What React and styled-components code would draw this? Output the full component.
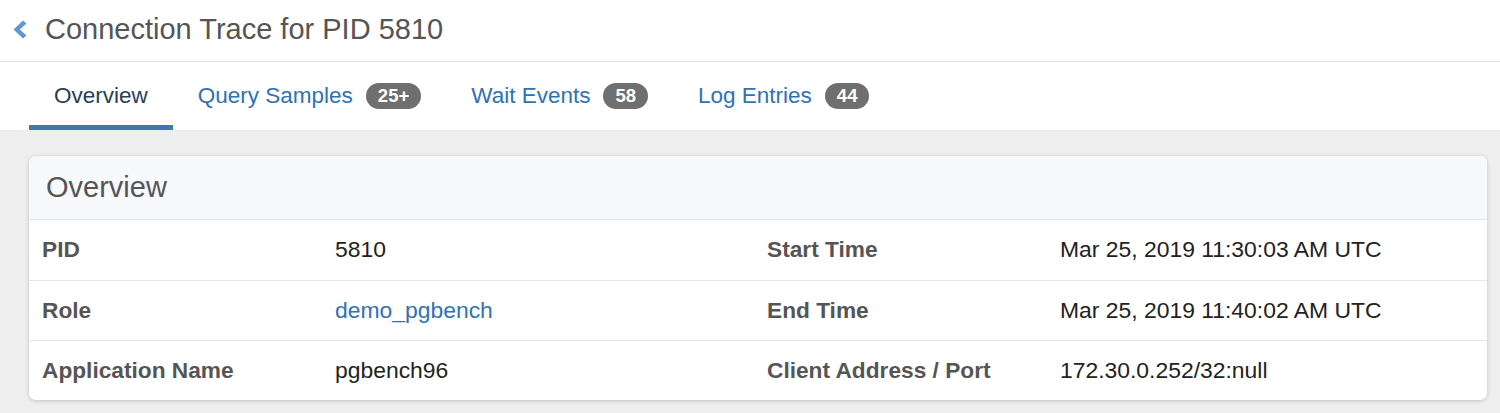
import React from "react";
import styled, { createGlobalStyle } from "styled-components";

const GlobalStyle = createGlobalStyle`
  html, body {
    margin: 0;
    padding: 0;
    background: #eeeeee;
    font-family: "Liberation Sans", Arial, sans-serif;
  }
`;

const Page = styled.div`
  width: 1500px;
  height: 413px;
  background: #eeeeee;
  overflow: hidden;
`;

const Header = styled.div`
  height: 61px;
  background: #fff;
  border-bottom: 1px solid #e2e2e2;
  display: flex;
  align-items: center;
  padding-left: 13px;
`;

const Back = styled.a`
  display: flex;
  align-items: center;
  width: 32px;
  color: #6298cf;
  cursor: pointer;
  margin-top: -3px;
`;

const Title = styled.h1`
  margin: 0;
  font-weight: normal;
  font-size: 29px;
  color: #555;
  line-height: 1;
  margin-top: -3px;
`;

const TabBar = styled.ul`
  list-style: none;
  margin: 0;
  padding: 0 0 0 29px;
  height: 68px;
  background: #fff;
  display: flex;
`;

const Tab = styled.li`
  display: flex;
  align-items: center;
  gap: 13px;
  padding: 0 25px;
  font-size: 22.5px;
  color: ${(p) => (p.active ? "#2b3e55" : "#2f72b5")};
  border-bottom: 5px solid ${(p) => (p.active ? "#3b78b6" : "transparent")};
  padding-top: 4px;
  cursor: pointer;
`;

const Badge = styled.span`
  background: #6f6f6f;
  color: #fff;
  font-weight: bold;
  font-size: 18.5px;
  height: 26px;
  line-height: 26px;
  padding: 0 12px;
  border-radius: 13px;
`;

const Content = styled.div`
  padding: 26px 13px 0 29px;
`;

const Card = styled.div`
  background: #fff;
  border-radius: 7px;
  box-shadow: 0 1px 4px rgba(0, 0, 0, 0.18);
  overflow: hidden;
`;

const CardHeader = styled.div`
  height: 63px;
  background: #f7f9fd;
  border-bottom: 1px solid #e1e4ea;
  display: flex;
  align-items: center;
  padding-left: 17px;
  font-size: 29px;
  color: #555;
`;

const Table = styled.table`
  width: 100%;
  border-collapse: collapse;
  table-layout: fixed;
`;

const Row = styled.tr`
  height: 60px;
  & + & td {
    border-top: 1px solid #e6e8ee;
  }
`;

const Label = styled.td`
  width: 293px;
  padding: 0 0 0 13px;
  font-weight: bold;
  font-size: 22.7px;
  color: #555;
`;

const Value = styled.td`
  width: ${(p) => (p.w ? `${p.w}px` : "auto")};
  padding: 0;
  font-size: 22.9px;
  color: #222;
`;

const Link = styled.a`
  color: #2f72b5;
  text-decoration: none;
`;

const rows = [
  ["PID", "5810", "Start Time", "Mar 25, 2019 11:30:03 AM UTC"],
  ["Role", <Link key="r">demo_pgbench</Link>, "End Time", "Mar 25, 2019 11:40:02 AM UTC"],
  ["Application Name", "pgbench96", "Client Address / Port", "172.30.0.252/32:null"],
];

export default function App() {
  return (
    <Page>
      <GlobalStyle />
      <Header>
        <Back>
          <svg width="14" height="19" viewBox="0 0 14 19">
            <path d="M10 0.5 L13.5 3.5 L6.8 9.5 L13.5 15.5 L10 18.5 L0.5 9.5 Z" fill="currentColor" />
          </svg>
        </Back>
        <Title>Connection Trace for PID 5810</Title>
      </Header>
      <TabBar>
        <Tab active>Overview</Tab>
        <Tab>
          Query Samples <Badge>25+</Badge>
        </Tab>
        <Tab>
          Wait Events <Badge>58</Badge>
        </Tab>
        <Tab>
          Log Entries <Badge>44</Badge>
        </Tab>
      </TabBar>
      <Content>
        <Card>
          <CardHeader>Overview</CardHeader>
          <Table>
            <tbody>
              {rows.map((r, i) => (
                <Row key={i}>
                  <Label>{r[0]}</Label>
                  <Value w={419}>{r[1]}</Value>
                  <Label>{r[2]}</Label>
                  <Value>{r[3]}</Value>
                </Row>
              ))}
            </tbody>
          </Table>
        </Card>
      </Content>
    </Page>
  );
}
